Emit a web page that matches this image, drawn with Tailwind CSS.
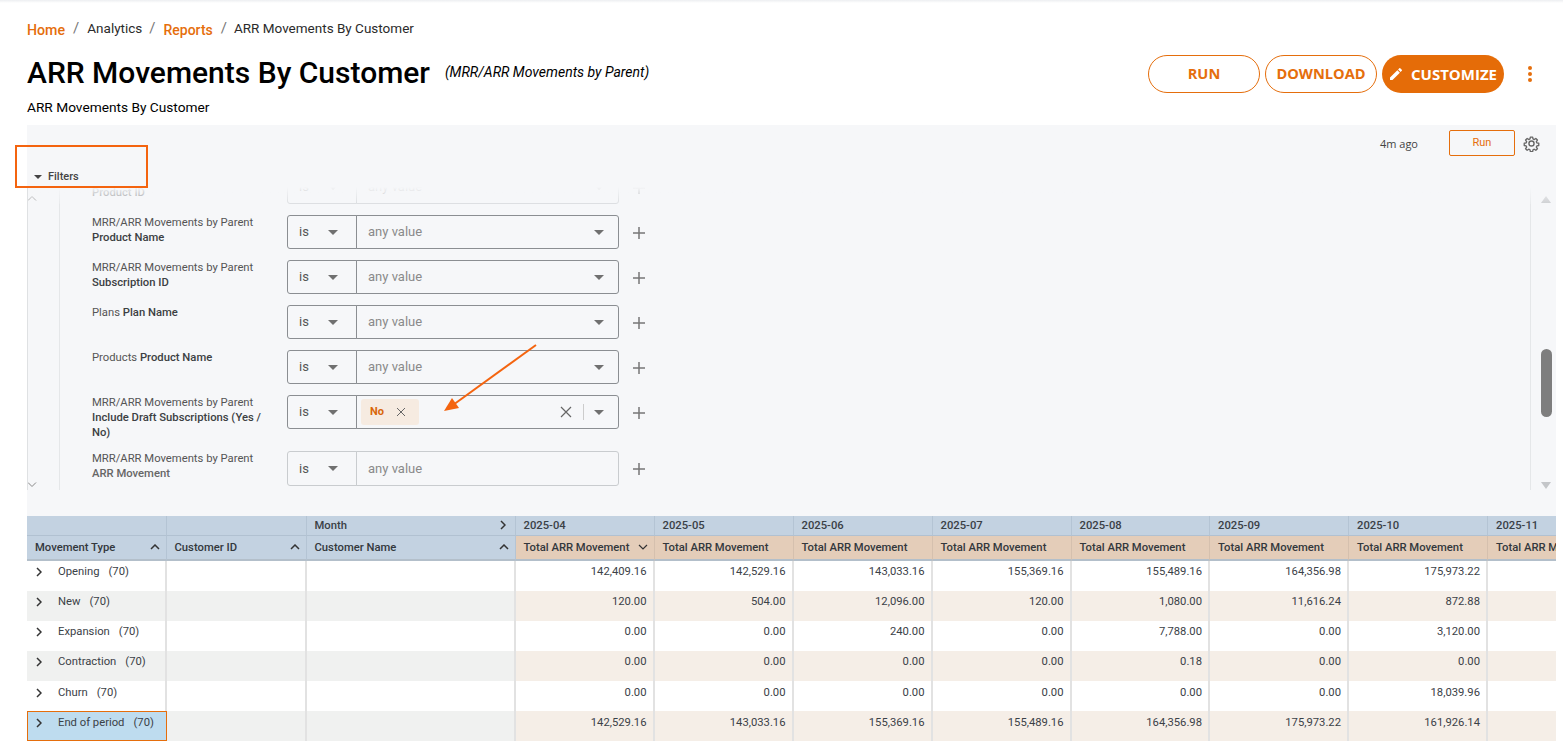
<!DOCTYPE html>
<html lang="en">
<head>
<meta charset="UTF-8">
<title>ARR Movements By Customer</title>
<script src="https://cdn.jsdelivr.net/npm/@tailwindcss/browser@4"></script>
</head>
<body class="bg-white font-['Roboto',sans-serif] text-[#262d33] h-[748px] overflow-hidden relative">
  <div class="h-[3px] bg-gradient-to-b from-gray-200/70 to-white"></div>

  <!-- page header -->
  <div class="pl-[27px] pr-[7px]">
    <nav class="flex items-center h-[18px] mt-[16px] mb-[1px] text-[13.5px] text-[#2b2b2b] leading-[18px]">
      <a class="text-[14.2px] font-medium text-[#e56e0c] mt-[3px]">Home</a>
      <span class="mx-[8px] text-[#777] text-[15px]">/</span>
      <span>Analytics</span>
      <span class="ml-[7px] mr-[8px] text-[#777] text-[15px]">/</span>
      <a class="text-[14px] font-medium text-[#e56e0c] mt-[3px]">Reports</a>
      <span class="ml-[8px] mr-[7px] text-[#777] text-[15px]">/</span>
      <span>ARR Movements By Customer</span>
    </nav>

    <div class="flex items-start justify-between h-[87px]">
      <div>
        <div class="flex items-center mt-[17px] h-[36px]">
          <h1 class="text-[30px] font-medium text-black leading-[36px]">ARR Movements By Customer</h1>
          <span class="ml-[15px] text-[14px] italic text-black -mt-[2px]">(MRR/ARR Movements by Parent)</span>
        </div>
        <p class="text-[13.7px] text-black mt-[7px] leading-[18px]">ARR Movements By Customer</p>
      </div>
      <div class="flex items-center gap-[5px] mt-[17px] font-['Open_Sans',sans-serif] font-bold text-[14.6px] mr-[18px]">
        <button class="w-[112px] h-[38px] rounded-full border border-[#e56e0c] text-[#e56e0c]">RUN</button>
        <button class="w-[112px] h-[38px] rounded-full border border-[#e56e0c] text-[#e56e0c]">DOWNLOAD</button>
        <button class="w-[122px] h-[38px] rounded-full bg-[#e56c08] text-white text-[15px] flex items-center pl-[6px] gap-[7px] whitespace-nowrap">
          <svg class="w-[16px] h-[16px]" viewBox="0 0 24 24" fill="#fff"><path d="M3 17.25V21h3.75L17.81 9.94l-3.75-3.75L3 17.25zM20.71 7.04a1 1 0 0 0 0-1.41l-2.34-2.34a1 1 0 0 0-1.41 0l-1.83 1.83 3.75 3.75 1.83-1.83z"/></svg>
          CUSTOMIZE
        </button>
        <span class="ml-[13px] flex flex-col gap-[2px] w-[16px] items-center">
          <i class="w-[4px] h-[4px] rounded-full bg-[#e56e0c]"></i>
          <i class="w-[4px] h-[4px] rounded-full bg-[#e56e0c]"></i>
          <i class="w-[4px] h-[4px] rounded-full bg-[#e56e0c]"></i>
        </span>
      </div>
    </div>

    <!-- filters panel -->
    <section class="bg-[#f6f7f9] h-[391px] flex flex-col">
      <div class="h-[62px] flex-none relative">
        <div class="flex items-center justify-end pt-[6px] pr-[16px]">
          <span class="font-['Open_Sans',sans-serif] text-[11px] text-[#444] mr-[31px] mt-[1px]">4m ago</span>
          <button class="w-[66px] h-[26px] pt-[1px] border border-[#e56e0c] rounded-[2px] text-[11px] text-[#e56e0c] -mt-[1px]">Run</button>
          <svg class="w-[17px] h-[17px] ml-[8px]" viewBox="0 0 24 24" fill="none" stroke="#666" stroke-width="2" stroke-linejoin="round"><path d="M10.3 2.5h3.4l.5 2.8 1.9.8 2.3-1.6 2.4 2.4-1.6 2.3.8 1.9 2.8.5v3.4l-2.8.5-.8 1.9 1.6 2.3-2.4 2.4-2.3-1.6-1.9.8-.5 2.8h-3.4l-.5-2.8-1.9-.8-2.3 1.6-2.4-2.4 1.6-2.3-.8-1.9-2.8-.5v-3.4l2.8-.5.8-1.9-1.6-2.3 2.4-2.4 2.3 1.6 1.9-.8z" transform="translate(.6 .6) scale(.95)"/><circle cx="12" cy="12" r="3.6"/></svg>
        </div>
        <div class="absolute left-[7px] top-[44px] flex items-center gap-[6px] text-[11px] font-medium text-[#444]">
          <i class="w-0 h-0 border-x-[4px] border-x-transparent border-t-[4px] border-t-[#444]"></i>Filters
        </div>
      </div>

      <div class="relative h-[303px] flex-none overflow-hidden border-l border-[#dfe1e3]">
        <!-- scroll chevrons and line -->
        <svg class="absolute left-[-1px] top-[8px] w-[10px] h-[7px]" viewBox="0 0 10 7" fill="none" stroke="#888"><path d="M1 5.5 5 1.5l4 4"/></svg>
        <svg class="absolute left-[-1px] top-[294px] w-[10px] h-[7px]" viewBox="0 0 10 7" fill="none" stroke="#888"><path d="M1 1.5l4 4 4-4"/></svg>
        <div class="absolute left-[31px] top-0 bottom-0 w-px bg-[#e5e7e9]"></div>
        <div class="absolute right-[25px] top-0 bottom-0 w-px bg-[#e5e7e9]"></div>
        <i class="absolute right-[5px] top-[9px] w-0 h-0 border-x-[5px] border-x-transparent border-b-[7px] border-b-[#c4c6c9]"></i>
        <i class="absolute right-[5px] top-[295px] w-0 h-0 border-x-[5px] border-x-transparent border-t-[7px] border-t-[#c4c6c9]"></i>
        <div class="absolute right-[4px] top-[162px] w-[11px] h-[68px] rounded-full bg-[#7e7e7e]"></div>

        <div id="filters" class="-mt-[17px]"></div>
        <div class="absolute inset-x-0 top-0 h-[17px] bg-gradient-to-b from-[#f6f7f9] to-[#f6f7f9]/20"></div>
      </div>
    </section>

    <!-- pivot table -->
    <div class="w-[1529px] overflow-hidden text-[11.25px] leading-[15px]">
      <div id="table" class="w-[1640px]"></div>
    </div>
  </div>

  <!-- annotations -->
  <div class="absolute left-[15px] top-[145px] w-[133px] h-[43px] border-[2.5px] border-[#f4640f] pointer-events-none"></div>
  <svg class="absolute left-[436px] top-[340px] w-[110px] h-[80px] pointer-events-none" viewBox="0 0 110 80">
    <path d="M100 5 17 65" stroke="#f4640f" stroke-width="2" fill="none"/>
    <path d="M8 71 16 58 23 68z" fill="#f4640f"/>
  </svg>

  <script>
    // filter rows: first line, second line, height
    const filterRows = [
      ['&nbsp;', 'Product ID', 45, 'fade'],
      ['MRR/ARR Movements by Parent', 'Product Name', 45],
      ['MRR/ARR Movements by Parent', 'Subscription ID', 45],
      ['Plans', 'Plan Name', 45, 'inline'],
      ['Products', 'Product Name', 45, 'inline'],
      ['MRR/ARR Movements by Parent', 'Include Draft Subscriptions (Yes / No)', 56, 'chip'],
      ['MRR/ARR Movements by Parent', 'ARR Movement', 45, 'last']
    ];
    const caret = '<i class="w-0 h-0 border-x-[5px] border-x-transparent border-t-[5px] border-t-[#707070]"></i>';

    document.getElementById('filters').innerHTML = filterRows.map(([a, b, h, kind]) => {
      const label = kind === 'inline'
        ? `<span class="text-[#555]">${a}</span> <span class="font-medium">${b}</span>`
        : `<span class="block text-[#555]">${a}</span><span class="block font-medium ${kind === 'last' ? 'text-[#666]' : ''}">${b}</span>`;
      const border = kind === 'last' || kind === 'fade' ? 'border-[#c9cccf]' : 'border-[#8b8e92]';
      let value = `<span class="text-[#8a8a8a]">any value</span><span class="ml-auto mr-[14px] flex">${caret}</span>`;
      if (kind === 'last') value = '<span class="text-[#8a8a8a]">any value</span>';
      if (kind === 'chip') value = `<span class="-ml-[7px] h-[26px] w-[58px] rounded-[3px] bg-[#f6ebe1] flex items-center pl-[9px] text-[11px] font-bold text-[#d9660a]">No<svg class="w-[10px] h-[10px] ml-[12px]" viewBox="0 0 10 10" stroke="#666" fill="none"><path d="M1 1l8 8M9 1l-8 8"/></svg></span>
        <svg class="ml-auto w-[12px] h-[12px]" viewBox="0 0 12 12" stroke="#666" stroke-width="1.2" fill="none"><path d="M1 1l10 10M11 1 1 11"/></svg>
        <span class="w-px h-[16px] bg-[#ccc] ml-[11px] mr-[10px]"></span><span class="mr-[14px] flex">${caret}</span>`;
      return `<div class="flex items-start pl-[64px] ${kind === 'fade' ? 'opacity-70' : ''}" style="height:${h}px">
        <div class="w-[195px] pr-[16px] text-[11.25px] leading-[15px] text-[#3c3f43]">${label}</div>
        <div class="flex w-[332px] ${kind === 'last' ? 'h-[35px]' : 'h-[34px]'} text-[13px] text-[#555]">
          <div class="w-[70px] flex items-center justify-between pl-[11px] pr-[18px] border ${border} rounded-l-[3px]">is${caret}</div>
          <div class="flex-1 flex items-center pl-[11px] border ${border} rounded-r-[3px] -ml-px">${value}</div>
        </div>
        <svg class="w-[12px] h-[12px] ml-[14px] mt-[12px]" viewBox="0 0 12 12" stroke="#777" stroke-width="1.5"><path d="M6 0v12M0 6h12"/></svg>
      </div>`;
    }).join('');

    // table data
    const cols = 'grid grid-cols-[139.5px_140px_209px_139px_139px_139px_139px_138.5px_139px_139px_139px]';
    const months = ['2025-04','2025-05','2025-06','2025-07','2025-08','2025-09','2025-10','2025-11'];
    const rows = [
      ['Opening', '142,409.16','142,529.16','143,033.16','155,369.16','155,489.16','164,356.98','175,973.22',''],
      ['New', '120.00','504.00','12,096.00','120.00','1,080.00','11,616.24','872.88',''],
      ['Expansion', '0.00','0.00','240.00','0.00','7,788.00','0.00','3,120.00',''],
      ['Contraction', '0.00','0.00','0.00','0.00','0.18','0.00','0.00',''],
      ['Churn', '0.00','0.00','0.00','0.00','0.00','0.00','18,039.96',''],
      ['End of period', '142,529.16','143,033.16','155,369.16','155,489.16','164,356.98','175,973.22','161,926.14','']
    ];
    const up = '<svg class="w-[10px] h-[6px] ml-auto" viewBox="0 0 10 6" fill="none" stroke="#333" stroke-width="1.5"><path d="M1 5l4-4 4 4"/></svg>';
    const down = '<svg class="w-[10px] h-[6px] ml-auto" viewBox="0 0 10 6" fill="none" stroke="#333" stroke-width="1.2"><path d="M1 1l4 4 4-4"/></svg>';
    const right = '<svg class="w-[6px] h-[10px]" viewBox="0 0 6 10" fill="none" stroke="#333" stroke-width="1.5"><path d="M1 1l4 4-4 4"/></svg>';
    const th1 = 'h-[19.5px] bg-[#c3d2e1] border-r border-[#b4c4d4] border-b border-b-[#b1c1d1] px-[8px] flex items-center text-[#3a4046] font-medium';
    const th2 = 'h-[25.5px] border-r border-b-2 border-b-[#b3bfca] pl-[8px] pr-[6px] flex items-center text-[#33383d] font-medium whitespace-nowrap';

    let html = `<div class="${cols}">
      <div class="${th1}"></div><div class="${th1}"></div>
      <div class="${th1}">Month<span class="ml-auto mr-[1px]">${right}</span></div>
      ${months.map(m => `<div class="${th1}">${m}</div>`).join('')}
    </div><div class="${cols}">
      ${['Movement Type','Customer ID','Customer Name'].map(t => `<div class="${th2} bg-[#c3d2e1] border-r-[#b4c4d4]">${t}${up}</div>`).join('')}
      ${months.map((m, i) => `<div class="${th2} bg-[#e4cdb9] border-r-[#d5c0ae]">Total ARR Movement${i === 0 ? down : ''}</div>`).join('')}
    </div>`;

    rows.forEach((r, i) => {
      const odd = i % 2 === 1;
      const low = i > 3;
      const dim = odd ? 'bg-[#f0f1f0]' : 'bg-white';
      const val = odd ? 'bg-[#f5eee7]' : 'bg-white';
      const sel = i === 5 ? 'bg-[#bedcef] border-[1.5px] border-[#e56e0c] pl-[8px] pt-[2.5px]' : `${dim} border-r-2 border-[#e2e2e2] pl-[9px] ${low ? 'pt-[4px]' : 'pt-[3px]'}`;
      html += `<div class="${cols} h-[30px] text-[#3b4147]">
        <div class="${sel} flex items-start whitespace-nowrap">
          <span class="mt-[3px] flex-none mr-[16px]">${right}</span><span>${r[0]}</span><span class="ml-[9px]">(70)</span>
        </div>
        <div class="${dim} border-r-2 border-[#e2e2e2]"></div>
        <div class="${dim} border-r-2 border-[#e2e2e2]"></div>
        ${r.slice(1).map(v => `<div class="${val} border-r-2 border-[#e2e2e2] text-right pr-[6px] ${low ? 'pt-[4px]' : 'pt-[3px]'}">${v}</div>`).join('')}
      </div>`;
    });
    document.getElementById('table').innerHTML = html;
  </script>
</body>
</html>
